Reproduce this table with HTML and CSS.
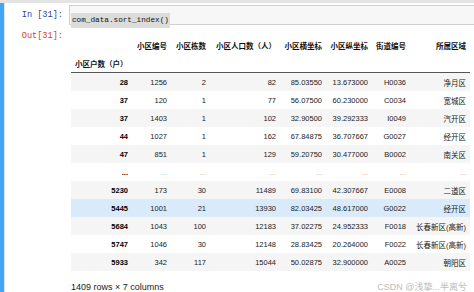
FILE: index.html
```html
<!DOCTYPE html>
<html lang="zh-cn">
<head>
    <meta charset="UTF-8">
    <meta name="viewport" content="width=device-width, initial-scale=1.0">
    <title>com_data.sort_index()</title>
    <link rel="stylesheet" href="styles.css">
</head>
<body>
    <div class="top-bar"></div>
    <div class="cell">
        <!-- Entrada -->
        <div class="input-row">
            <div class="prompt in-prompt">In&nbsp;[31]:</div>
            <div class="input-area"><span class="code">com_data.sort_index()</span></div>
        </div>

        <!-- Saída -->
        <div class="output-row">
            <div class="prompt out-prompt">Out[31]:</div>
            <div class="output-area">
                <table class="dataframe">
                    <colgroup>
                        <col class="c-idx"><col class="c1"><col class="c2"><col class="c3">
                        <col class="c4"><col class="c5"><col class="c6"><col class="c7">
                    </colgroup>
                    <thead>
                        <tr>
                            <th></th>
                            <th>小区编号</th>
                            <th>小区栋数</th>
                            <th>小区人口数（人）</th>
                            <th>小区横坐标</th>
                            <th>小区纵坐标</th>
                            <th>街道编号</th>
                            <th>所属区域</th>
                        </tr>
                        <tr class="index-name">
                            <th>小区户数（户）</th>
                            <th></th><th></th><th></th><th></th><th></th><th></th><th></th>
                        </tr>
                    </thead>
                    <tbody>
                        <tr><th>28</th><td>1256</td><td>2</td><td>82</td><td>85.03550</td><td>13.673000</td><td>H0036</td><td>净月区</td></tr>
                        <tr><th>37</th><td>120</td><td>1</td><td>77</td><td>56.07500</td><td>60.230000</td><td>C0034</td><td>宽城区</td></tr>
                        <tr><th>37</th><td>1403</td><td>1</td><td>102</td><td>32.90500</td><td>39.292333</td><td>I0049</td><td>汽开区</td></tr>
                        <tr><th>44</th><td>1027</td><td>1</td><td>162</td><td>67.84875</td><td>36.707667</td><td>G0027</td><td>经开区</td></tr>
                        <tr><th>47</th><td>851</td><td>1</td><td>129</td><td>59.20750</td><td>30.477000</td><td>B0002</td><td>南关区</td></tr>
                        <tr class="ellipsis"><th>...</th><td>...</td><td>...</td><td>...</td><td>...</td><td>...</td><td>...</td><td>...</td></tr>
                        <tr><th>5230</th><td>173</td><td>30</td><td>11489</td><td>69.83100</td><td>42.307667</td><td>E0008</td><td>二道区</td></tr>
                        <tr class="hover"><th>5445</th><td>1001</td><td>21</td><td>13930</td><td>82.03425</td><td>48.617000</td><td>G0022</td><td>经开区</td></tr>
                        <tr><th>5684</th><td>1043</td><td>100</td><td>12183</td><td>37.02275</td><td>24.952333</td><td>F0018</td><td>长春新区(高新)</td></tr>
                        <tr><th>5747</th><td>1046</td><td>30</td><td>12148</td><td>28.83425</td><td>20.264000</td><td>F0022</td><td>长春新区(高新)</td></tr>
                        <tr><th>5933</th><td>342</td><td>117</td><td>15044</td><td>50.02875</td><td>32.900000</td><td>A0025</td><td>朝阳区</td></tr>
                    </tbody>
                </table>
                <div class="footer">
                    <span class="shape">1409 rows × 7 columns</span>
                    <span class="watermark">CSDN @浅挚...半离兮</span>
                </div>
            </div>
        </div>
    </div>
</body>
</html>
```

FILE: styles.css
```css
html, body {
    margin: 0;
    padding: 0;
    background-color: white;
    height: 100%;
    overflow: hidden;
}
body {
    font-family: "Liberation Sans", "Noto Sans CJK SC", Arial, sans-serif;
    color: #000;
}
.top-bar {
    height: 3px;
    background-color: #e4e4e4;
}
.cell {
    border-left: 4px solid #42a5f5;
    box-shadow: inset 1px 0 0 #e0e0e0;
    height: 289px;
    box-sizing: border-box;
    padding-top: 2px;
}
.input-row, .output-row {
    display: flex;
}
.prompt {
    width: 65px;
    box-sizing: border-box;
    padding-right: 6px;
    text-align: right;
    font-family: "Liberation Mono", "DejaVu Sans Mono", monospace;
    font-size: 8.6px;
    flex-shrink: 0;
}
.in-prompt {
    color: #303f9f;
    line-height: 20px;
}
.out-prompt {
    color: #d84315;
    line-height: 18px;
    padding-top: 0;
}
.input-area {
    flex: 1;
    height: 20px;
    box-sizing: border-box;
    background-color: #f7f7f7;
    border: 1px solid #cfcfcf;
    border-right: none;
    padding: 2px 0 0 1px;
}
.code {
    display: inline-block;
    font-family: "Liberation Mono", "DejaVu Sans Mono", monospace;
    font-size: 7.7px;
    line-height: 15px;
    background-color: #dcdcdc;
    padding: 0 1px;
    color: #111;
}
.output-row {
    margin-top: 2px;
}
.output-area {
    padding-left: 2px;
    padding-top: 9px;
}
.dataframe {
    border-collapse: collapse;
    table-layout: fixed;
    width: 399px;
    font-size: 7.5px;
    color: #222;
}
.c-idx { width: 61px; }
.c1 { width: 39px; }
.c2 { width: 39px; }
.c3 { width: 70px; }
.c4 { width: 46px; }
.c5 { width: 46px; }
.c6 { width: 38px; }
.c7 { width: 60px; }
.dataframe th, .dataframe td {
    height: 18px;
    padding: 0 4px;
    text-align: right;
    white-space: nowrap;
    vertical-align: middle;
    overflow: visible;
}
.dataframe th {
    font-weight: bold;
    color: #000;
}
.dataframe thead th {
    font-family: "Noto Sans CJK SC", sans-serif;
    font-size: 7.5px;
    color: #111;
}
.index-name th:first-child {
    text-align: left;
}
.dataframe thead tr:last-child th {
    border-bottom: 1px solid #555;
}
.dataframe tbody tr:nth-child(odd) {
    background-color: #f5f5f5;
}
.dataframe tbody tr.hover {
    background-color: #d9ebfb;
}
.dataframe tbody td {
    font-family: "Liberation Sans", "Noto Sans CJK SC", sans-serif;
}
.ellipsis td {
    color: #aaa;
}
.footer {
    display: flex;
    justify-content: space-between;
    align-items: center;
    width: 399px;
    margin-top: 9px;
}
.shape {
    font-size: 9px;
    color: #222;
}
.watermark {
    font-size: 9px;
    color: #bbb;
    margin-right: 3px;
}
```
